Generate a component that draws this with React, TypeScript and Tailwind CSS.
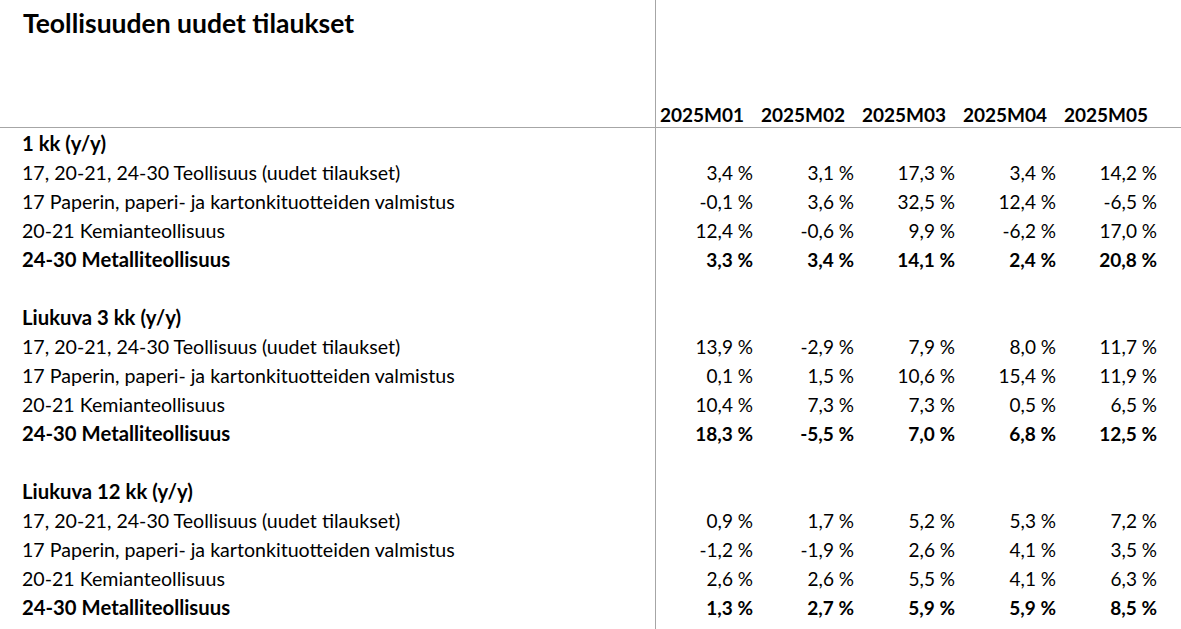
import React from "react";

type Row = { label: string; values: string[]; bold?: boolean };
type Section = { title: string; rows: Row[] };

const months = ["2025M01", "2025M02", "2025M03", "2025M04", "2025M05"];

const sections: Section[] = [
  {
    title: "1 kk (y/y)",
    rows: [
      { label: "17, 20-21, 24-30 Teollisuus (uudet tilaukset)", values: ["3,4 %", "3,1 %", "17,3 %", "3,4 %", "14,2 %"] },
      { label: "17 Paperin, paperi- ja kartonkituotteiden valmistus", values: ["-0,1 %", "3,6 %", "32,5 %", "12,4 %", "-6,5 %"] },
      { label: "20-21 Kemianteollisuus", values: ["12,4 %", "-0,6 %", "9,9 %", "-6,2 %", "17,0 %"] },
      { label: "24-30 Metalliteollisuus", values: ["3,3 %", "3,4 %", "14,1 %", "2,4 %", "20,8 %"], bold: true },
    ],
  },
  {
    title: "Liukuva 3 kk (y/y)",
    rows: [
      { label: "17, 20-21, 24-30 Teollisuus (uudet tilaukset)", values: ["13,9 %", "-2,9 %", "7,9 %", "8,0 %", "11,7 %"] },
      { label: "17 Paperin, paperi- ja kartonkituotteiden valmistus", values: ["0,1 %", "1,5 %", "10,6 %", "15,4 %", "11,9 %"] },
      { label: "20-21 Kemianteollisuus", values: ["10,4 %", "7,3 %", "7,3 %", "0,5 %", "6,5 %"] },
      { label: "24-30 Metalliteollisuus", values: ["18,3 %", "-5,5 %", "7,0 %", "6,8 %", "12,5 %"], bold: true },
    ],
  },
  {
    title: "Liukuva 12 kk (y/y)",
    rows: [
      { label: "17, 20-21, 24-30 Teollisuus (uudet tilaukset)", values: ["0,9 %", "1,7 %", "5,2 %", "5,3 %", "7,2 %"] },
      { label: "17 Paperin, paperi- ja kartonkituotteiden valmistus", values: ["-1,2 %", "-1,9 %", "2,6 %", "4,1 %", "3,5 %"] },
      { label: "20-21 Kemianteollisuus", values: ["2,6 %", "2,6 %", "5,5 %", "4,1 %", "6,3 %"] },
      { label: "24-30 Metalliteollisuus", values: ["1,3 %", "2,7 %", "5,9 %", "5,9 %", "8,5 %"], bold: true },
    ],
  },
];

const Line = ({ label, values = [], bold }: { label?: string; values?: string[]; bold?: boolean }) => (
  <div className={`flex h-[29px] ${bold ? "font-bold" : ""}`}>
    <div
      className={`w-[656px] shrink-0 border-r border-[#a6a6a6] pl-[22px] pt-[2px] flex items-center ${
        bold ? "text-[20.3px]" : "text-[19.6px]"
      }`}
    >
      {label}
    </div>
    {values.map((v, i) => (
      <div key={i} className="w-[101px] shrink-0 pr-[4px] pt-[2px] flex items-center justify-end">
        {v}
      </div>
    ))}
  </div>
);

export default function App() {
  return (
    <div
      className="w-[1181px] h-[629px] overflow-hidden bg-white text-black text-[19px] leading-none"
      style={{ fontFamily: "Lato, 'Open Sans', sans-serif" }}
    >
      {/* Title block */}
      <div className="flex h-[99px]">
        <div className="w-[656px] shrink-0 border-r border-[#a6a6a6] pl-[23px] pt-[10px]">
          <h1 className="text-[26.5px] font-bold">Teollisuuden uudet tilaukset</h1>
        </div>
      </div>
      {/* Header row */}
      <div className="flex h-[29px] font-bold border-b border-[#a6a6a6]">
        <div className="w-[656px] shrink-0 border-r border-[#a6a6a6]" />
        {months.map((m) => (
          <div key={m} className="w-[101px] shrink-0 pl-[4px] pt-[2px] flex items-center">
            {m}
          </div>
        ))}
      </div>
      {sections.map((s, si) => (
        <div key={s.title}>
          {si > 0 && <Line />}
          <Line label={s.title} bold />
          {s.rows.map((r) => (
            <Line key={r.label} label={r.label} values={r.values} bold={r.bold} />
          ))}
        </div>
      ))}
      <Line />
    </div>
  );
}
